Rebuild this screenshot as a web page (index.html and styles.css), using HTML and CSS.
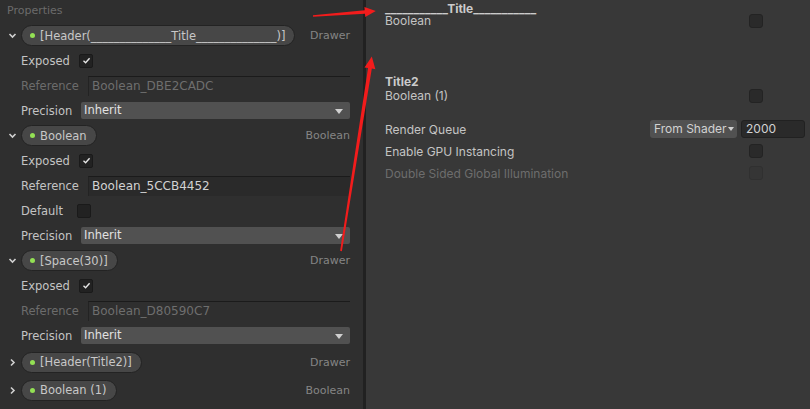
FILE: index.html
```html
<!DOCTYPE html>
<html>
<head>
    <title>Shader Graph Properties</title>
    <meta name="viewport" content="width=device-width, initial-scale=1.0">
    <link rel="stylesheet" href="styles.css">
</head>
<body>
    <div class="blackboard">
        <div class="bb-title">Properties</div>

        <div class="prop">
            <div class="prop-head">
                <svg class="chevron" width="9" height="9" viewBox="0 0 9 9"><polyline points="1.5,3 4.5,6 7.5,3" /></svg>
                <div class="pill"><span class="dot"></span>[Header(______________Title______________)]</div>
                <span class="kind">Drawer</span>
            </div>
            <div class="field">
                <span class="label label-exposed">Exposed</span>
                <span class="check"><svg width="9" height="9" viewBox="0 0 9 9"><polyline points="1.5,4.8 3.6,6.8 7.6,2.2" /></svg></span>
            </div>
            <div class="field">
                <span class="label dim">Reference</span>
                <span class="text-input disabled">Boolean_DBE2CADC</span>
            </div>
            <div class="field">
                <span class="label">Precision</span>
                <span class="dropdown">Inherit<i class="caret"></i></span>
            </div>
        </div>

        <div class="prop">
            <div class="prop-head">
                <svg class="chevron" width="9" height="9" viewBox="0 0 9 9"><polyline points="1.5,3 4.5,6 7.5,3" /></svg>
                <div class="pill"><span class="dot"></span>Boolean</div>
                <span class="kind">Boolean</span>
            </div>
            <div class="field">
                <span class="label label-exposed">Exposed</span>
                <span class="check"><svg width="9" height="9" viewBox="0 0 9 9"><polyline points="1.5,4.8 3.6,6.8 7.6,2.2" /></svg></span>
            </div>
            <div class="field">
                <span class="label">Reference</span>
                <span class="text-input">Boolean_5CCB4452</span>
            </div>
            <div class="field">
                <span class="label label-default">Default</span>
                <span class="check"></span>
            </div>
            <div class="field">
                <span class="label">Precision</span>
                <span class="dropdown">Inherit<i class="caret"></i></span>
            </div>
        </div>

        <div class="prop">
            <div class="prop-head">
                <svg class="chevron" width="9" height="9" viewBox="0 0 9 9"><polyline points="1.5,3 4.5,6 7.5,3" /></svg>
                <div class="pill"><span class="dot"></span>[Space(30)]</div>
                <span class="kind">Drawer</span>
            </div>
            <div class="field">
                <span class="label label-exposed">Exposed</span>
                <span class="check"><svg width="9" height="9" viewBox="0 0 9 9"><polyline points="1.5,4.8 3.6,6.8 7.6,2.2" /></svg></span>
            </div>
            <div class="field">
                <span class="label dim">Reference</span>
                <span class="text-input disabled">Boolean_D80590C7</span>
            </div>
            <div class="field">
                <span class="label">Precision</span>
                <span class="dropdown">Inherit<i class="caret"></i></span>
            </div>
        </div>

        <div class="prop collapsed">
            <div class="prop-head">
                <svg class="chevron" width="9" height="9" viewBox="0 0 9 9"><polyline points="3,1.5 6,4.5 3,7.5" /></svg>
                <div class="pill"><span class="dot"></span>[Header(Title2)]</div>
                <span class="kind">Drawer</span>
            </div>
        </div>

        <div class="prop collapsed">
            <div class="prop-head">
                <svg class="chevron" width="9" height="9" viewBox="0 0 9 9"><polyline points="3,1.5 6,4.5 3,7.5" /></svg>
                <div class="pill"><span class="dot"></span>Boolean (1)</div>
                <span class="kind">Boolean</span>
            </div>
        </div>
    </div>

    <div class="inspector">
        <div class="ins-block first">
            <div class="ins-text">
                <div class="ins-header">___________Title___________</div>
                <div class="ins-label">Boolean</div>
            </div>
            <div class="ins-control"><span class="toggle"></span></div>
        </div>

        <div class="ins-block second">
            <div class="ins-text">
                <div class="ins-header">Title2</div>
                <div class="ins-label">Boolean (1)</div>
            </div>
            <div class="ins-control"><span class="toggle"></span></div>
        </div>

        <div class="ins-row queue">
            <div class="ins-label">Render Queue</div>
            <div class="ins-control wide">
                <span class="popup">From Shader<i class="caret"></i></span>
                <span class="num-input">2000</span>
            </div>
        </div>
        <div class="ins-row">
            <div class="ins-label">Enable GPU Instancing</div>
            <div class="ins-control"><span class="toggle"></span></div>
        </div>
        <div class="ins-row">
            <div class="ins-label muted">Double Sided Global Illumination</div>
            <div class="ins-control"><span class="toggle off"></span></div>
        </div>
    </div>

    <!-- red annotation arrows drawn over the screenshot -->
    <svg class="annotations" width="810" height="409" viewBox="0 0 810 409">
        <g transform="translate(313,16) rotate(-4.5)">
            <polygon points="0,-0.7 52,-1.8 52,-5 63,0 52,5 52,1.8 0,0.7" />
        </g>
        <g transform="translate(341,251) rotate(-81)">
            <polygon points="0,-0.9 185,-1.9 185,-5.5 197,0 185,5.5 185,1.9 0,0.9" />
        </g>
    </svg>
</body>
</html>
```
FILE: styles.css
```css
body {
    margin: 0;
    display: flex;
    width: 810px;
    height: 409px;
    overflow: hidden;
    background: #383838;
    font-family: 'DejaVu Sans', Verdana, sans-serif;
    position: relative;
}

/* left: blackboard */
.blackboard {
    width: 350px;
    flex: none;
    padding-right: 13px;
    background: #2f2f2f;
    border-right: 3px solid #212121;
}

.bb-title {
    height: 23px;
    line-height: 22px;
    padding-left: 7px;
    font-size: 11px;
    color: #6b6b6b;
}

.prop-head {
    display: flex;
    align-items: center;
    height: 25px;
}

.collapsed .prop-head {
    height: 28px;
}

.chevron {
    width: 9px;
    margin: 0 4px 0 8px;
    fill: none;
    stroke: #d0d0d0;
    stroke-width: 1.6;
}

.pill {
    display: flex;
    align-items: center;
    height: 19px;
    padding: 0 9px 0 8px;
    background: #474747;
    border: 1px solid #232323;
    border-radius: 11px;
    font-size: 11.5px;
    color: #c8c8c8;
    white-space: nowrap;
}

.dot {
    width: 5px;
    height: 5px;
    margin-right: 5px;
    border-radius: 50%;
    background: #93e054;
}

.kind {
    margin-left: auto;
    font-size: 11px;
    color: #858585;
}

.field {
    display: flex;
    align-items: center;
    height: 25px;
    padding-left: 21px;
}

.label {
    font-size: 11.5px;
    color: #c4c4c4;
    flex: 1 0 auto;
}

.label.dim {
    color: #6c6c6c;
}

.label-exposed {
    flex: none;
    width: 58px;
}

.label-default {
    flex: none;
    width: 56px;
}

.check {
    width: 12px;
    height: 12px;
    display: flex;
    align-items: center;
    justify-content: center;
    background: #222;
    border: 1px solid #1a1a1a;
    border-radius: 2px;
}

.check svg {
    fill: none;
    stroke: #e6e6e6;
    stroke-width: 1.4;
}

.text-input {
    width: 258px;
    height: 19px;
    line-height: 19px;
    padding-left: 3px;
    box-sizing: content-box;
    background: #2a2a2a;
    border-top: 1px solid #1b1b1b;
    border-left: 1px solid #232323;
    font-size: 12px;
    color: #d2d2d2;
}

.text-input.disabled {
    background: #2f2f2f;
    color: #6e6e6e;
}

.dropdown {
    position: relative;
    width: 266px;
    height: 17px;
    line-height: 17px;
    padding-left: 3px;
    background: #515151;
    border-radius: 2px;
    font-size: 11.5px;
    color: #e2e2e2;
}

.caret {
    position: absolute;
    right: 7px;
    top: 7px;
    border-left: 4px solid transparent;
    border-right: 4px solid transparent;
    border-top: 5px solid #d0d0d0;
}

/* right: material inspector */
.inspector {
    flex: 1;
    padding: 3px 5px 0 19px;
    font-family: Inter, 'Noto Sans', sans-serif;
    font-size: 12px;
    color: #c4c4c4;
}

.ins-block {
    display: flex;
    align-items: flex-end;
}

.ins-block.first .ins-header {
    line-height: 11px;
}

.ins-block.first .ins-label {
    line-height: 13px;
}

.ins-block.second {
    margin-top: 48px;
}

.ins-text {
    flex: 1;
    line-height: 14px;
}

.ins-header {
    font-weight: 700;
    color: #cbcbcb;
}

.ins-control {
    width: 56px;
    flex: none;
}

.ins-control.wide {
    width: 155px;
    display: flex;
    gap: 4px;
}

.toggle {
    display: block;
    width: 12px;
    height: 12px;
    background: #2a2a2a;
    border: 1px solid #232323;
    border-radius: 3px;
}

.ins-block.first .toggle {
    margin-bottom: -1px;
}

.toggle.off {
    background: #353535;
    border-color: #303030;
}

.ins-row {
    display: flex;
    align-items: center;
    height: 22px;
}

.ins-row.queue {
    margin-top: 15px;
}

.ins-label.muted {
    color: #6d6d6d;
}

.ins-row .ins-label {
    flex: 1;
}

.popup {
    position: relative;
    width: 83px;
    height: 18px;
    line-height: 18px;
    padding-left: 4px;
    background: #515151;
    border-radius: 3px;
    color: #d2d2d2;
}

.popup .caret {
    right: 3px;
    top: 7px;
    border-left-width: 3.5px;
    border-right-width: 3.5px;
    border-top-width: 4px;
}

.num-input {
    flex: 1;
    height: 16px;
    line-height: 16px;
    padding-left: 4px;
    background: #2a2a2a;
    border: 1px solid #212121;
    border-radius: 3px;
    color: #d2d2d2;
}

.annotations {
    position: absolute;
    top: 0;
    left: 0;
    pointer-events: none;
}

.annotations polygon {
    fill: #f21c1c;
}
```
